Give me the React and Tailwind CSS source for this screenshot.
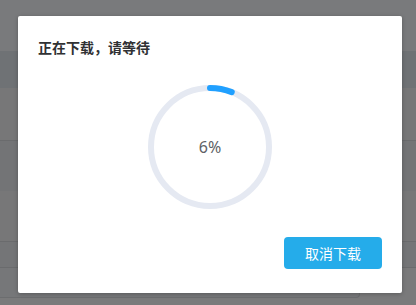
import React from 'react';

const CJK = { fontFamily: '"Noto Sans", "Noto Sans CJK SC", sans-serif' };

function Ring({ percent }) {
  const r = 59;
  const c = 2 * Math.PI * r;
  const dash = (percent / 100) * c;
  return (
    <div className="relative w-[124px] h-[124px]">
      <svg width="124" height="124" viewBox="0 0 124 124" className="block">
        <circle cx="62" cy="62" r={r} fill="none" stroke="#e5e9f2" strokeWidth="6" />
        <circle
          cx="62"
          cy="62"
          r={r}
          fill="none"
          stroke="#20a0ff"
          strokeWidth="6"
          strokeLinecap="round"
          strokeDasharray={`${dash} ${c}`}
          transform="rotate(-90 62 62)"
        />
      </svg>
      <div className="absolute inset-0 flex items-center justify-center text-[16px] text-[#606266]" style={CJK}>
        {percent}%
      </div>
    </div>
  );
}

export default function App() {
  return (
    <div className="relative w-[416px] h-[305px] overflow-hidden bg-[#7a7a7b]" style={CJK}>
      {/* dimmed page underneath */}
      <div className="flex flex-col">
        <div className="h-[51px] bg-[#797a7c]" />
        <div className="h-[37px] bg-[#6f7275]" />
        <div className="h-[53px] bg-[#777778] border-b border-[#6a6b6d]" />
        <div className="h-[50px] bg-[#737476]" />
        <div className="h-[51px] bg-[#777778] border-b border-[#6a6b6d]" />
        <div className="h-[26px] bg-[#747577] border-b border-[#6a6b6d]" />
        <div className="h-[30px] w-[360px] bg-[#767779] border-b border-r border-[#6c6d6f] rounded-br-[4px]" />
      </div>

      {/* dialog */}
      <div className="absolute left-[18px] top-[16px] w-[384px] h-[277px] bg-white rounded-[2px] shadow-[0_1px_4px_rgba(0,0,0,0.25)] flex flex-col">
        <div className="pl-[20px] pt-[23px] text-[14px] leading-[18px] font-semibold text-[#303133]">
          正在下载，请等待
        </div>
        <div className="flex justify-center mt-[28px]">
          <Ring percent={6} />
        </div>
        <div className="flex justify-end pr-[20px] mt-[28px]">
          <button
            type="button"
            className="w-[98px] h-[32px] rounded-[4px] bg-[#25acea] text-white text-[14px] flex items-center justify-center"
          >
            取消下载
          </button>
        </div>
      </div>
    </div>
  );
}
